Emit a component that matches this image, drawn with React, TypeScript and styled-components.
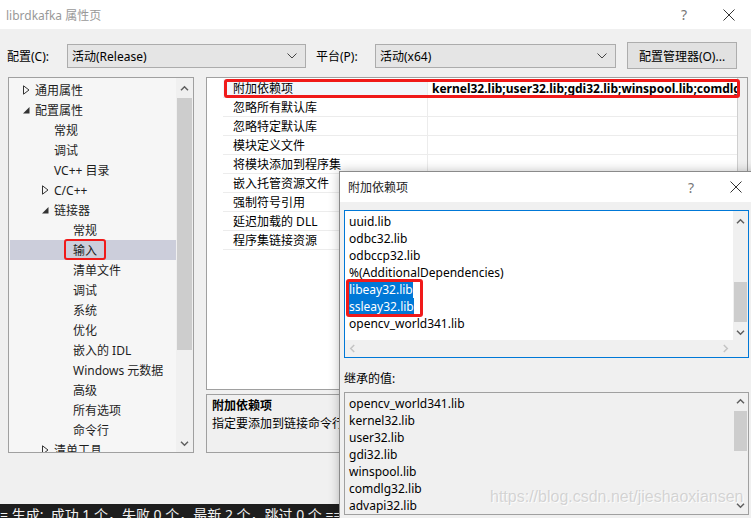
import React from "react";
import styled, { createGlobalStyle } from "styled-components";

const GlobalStyle = createGlobalStyle`
  html, body {
    margin: 0;
    padding: 0;
  }
  body {
    background: #f0f0f0;
    font-family: "Noto Sans", "Noto Sans CJK SC", sans-serif;
    font-size: 12px;
    color: #000;
  }
`;

const RED = "#f01a1a";

const Screen = styled.div`
  position: relative;
  width: 751px;
  height: 518px;
  overflow: hidden;
  background: #f0f0f0;
  display: flex;
  flex-direction: column;
`;

const MainWindow = styled.div`
  flex: 1;
  display: flex;
  flex-direction: column;
  min-height: 0;
`;

const TitleBar = styled.div`
  height: 29px;
  flex: none;
  background: #fff;
  display: flex;
  align-items: center;
  padding-left: 6px;
  color: #999;
  font-size: 12px;
`;

const TitleText = styled.span`
  flex: 1;
`;

const CaptionButton = styled.span<{ $width: number }>`
  width: ${(p) => p.$width}px;
  display: flex;
  justify-content: center;
  align-items: center;
  color: #777;
  font-size: 14px;
`;

const ConfigRow = styled.div`
  margin-top: 13px;
  height: 27px;
  flex: none;
  display: flex;
  align-items: center;
  padding-left: 7px;
`;

const FieldLabel = styled.span<{ $width: number; $gap?: number }>`
  width: ${(p) => p.$width}px;
  margin-left: ${(p) => p.$gap ?? 0}px;
  flex: none;
`;

const Combo = styled.div<{ $width: number }>`
  width: ${(p) => p.$width}px;
  height: 24px;
  box-sizing: border-box;
  flex: none;
  border: 1px solid #acacac;
  background: #e5e5e5;
  display: flex;
  align-items: center;
  padding: 0 8px 0 4px;
`;

const ComboText = styled.span`
  flex: 1;
`;

const PushButton = styled.div`
  margin-left: 11px;
  width: 110px;
  height: 27px;
  box-sizing: border-box;
  border: 1px solid #adadad;
  background: #e1e1e1;
  display: flex;
  align-items: center;
  justify-content: center;
`;

const Body = styled.div`
  margin-top: 8px;
  display: flex;
  padding-left: 8px;
  gap: 12px;
`;

const TreePanel = styled.div`
  width: 186px;
  height: 376px;
  box-sizing: border-box;
  border: 1px solid #a0a0a0;
  background: #f6f6f6;
  display: flex;
  overflow: hidden;
`;

const TreeList = styled.div`
  flex: 1;
  padding-top: 2px;
  overflow: hidden;
`;

const TreeRow = styled.div<{ $level: number; $selected?: boolean }>`
  height: 20px;
  display: flex;
  align-items: center;
  padding-left: ${(p) => 13 + 19 * (p.$level - 1)}px;
  margin-left: 1px;
  background: ${(p) => (p.$selected ? "#cccedb" : "transparent")};
  color: #1e1e1e;
  white-space: nowrap;
`;

const ToggleBox = styled.span`
  width: 12px;
  flex: none;
  display: flex;
  align-items: center;
`;

const TreeLabel = styled.span`
  position: relative;
  height: 100%;
  display: flex;
  align-items: center;
`;

const TreeMark = styled.span`
  position: absolute;
  left: -9px;
  right: -9px;
  top: -1px;
  bottom: 0;
  border: 2.5px solid ${RED};
  border-radius: 3px;
`;

const VScroll = styled.div<{ $width: number }>`
  width: ${(p) => p.$width}px;
  flex: none;
  display: flex;
  flex-direction: column;
  background: #f0f0f0;
`;

const ArrowBox = styled.div<{ $size: number }>`
  height: ${(p) => p.$size}px;
  flex: none;
  display: flex;
  align-items: center;
  justify-content: center;
`;

const Track = styled.div`
  flex: 1;
  display: flex;
  flex-direction: column;
`;

const Thumb = styled.div<{ $offset: number; $length: number }>`
  margin: ${(p) => p.$offset}px 1px 0;
  height: ${(p) => p.$length}px;
  background: #cdcdcd;
`;

const RightColumn = styled.div`
  width: 542px;
  display: flex;
  flex-direction: column;
  gap: 4px;
`;

const PropPanel = styled.div`
  height: 313px;
  box-sizing: border-box;
  border: 1px solid #a0a0a0;
  background: #fff;
  display: flex;
`;

const GridArea = styled.div`
  flex: 1;
  min-width: 0;
  padding: 1px 0 0 16px;
`;

const GridGutter = styled.div`
  width: 9px;
  flex: none;
  border-left: 1px solid #cfcfcf;
  background: #f0f0f0;
`;

const GridRow = styled.div`
  position: relative;
  height: 19px;
  box-sizing: border-box;
  display: flex;
  border-bottom: 1px solid #ececec;
`;

const NameCell = styled.div<{ $active?: boolean }>`
  width: 205px;
  flex: none;
  box-sizing: border-box;
  padding-left: 10px;
  display: flex;
  align-items: center;
  border-right: 1px solid #ececec;
  background: ${(p) => (p.$active ? "#f3f6fb" : "#fff")};
  white-space: nowrap;
`;

const ValueCell = styled.div`
  flex: 1;
  min-width: 0;
  padding-left: 4px;
  display: flex;
  align-items: center;
  font-weight: 700;
  white-space: nowrap;
  overflow: hidden;
`;

const RowMark = styled.span`
  position: absolute;
  left: 1px;
  right: -3px;
  top: 0;
  bottom: -1px;
  border: 3px solid ${RED};
  border-radius: 3px;
`;

const DescPanel = styled.div`
  height: 59px;
  box-sizing: border-box;
  border: 1px solid #a0a0a0;
  padding: 2px 0 0 5px;
  line-height: 18px;
  white-space: nowrap;
  overflow: hidden;
`;

const DescTitle = styled.div`
  font-weight: 700;
`;

const StatusStrip = styled.div`
  height: 14px;
  flex: none;
  background: #1e1e1e;
  color: #f1f1f1;
  font-size: 14px;
  line-height: 18px;
  padding-top: 2px;
  box-sizing: border-box;
  overflow: hidden;
  white-space: pre;
`;

const Dialog = styled.div`
  position: absolute;
  left: 339px;
  top: 171px;
  width: 430px;
  height: 360px;
  box-sizing: border-box;
  border: 1px solid #8a8a8a;
  background: #f0f0f0;
  box-shadow: 0 0 10px rgba(0, 0, 0, 0.25);
  display: flex;
  flex-direction: column;
`;

const DialogTitle = styled.div`
  height: 30px;
  flex: none;
  background: #fff;
  display: flex;
  align-items: center;
  padding-left: 8px;
  color: #1e1e1e;
`;

const DialogBody = styled.div`
  padding: 8px 0 0 4px;
`;

const EditBox = styled.div<{ $focused?: boolean; $height: number }>`
  width: 405px;
  height: ${(p) => p.$height}px;
  box-sizing: border-box;
  border: 1px solid ${(p) => (p.$focused ? "#0078d7" : "#a0a0a0")};
  background: ${(p) => (p.$focused ? "#fff" : "#f0f0f0")};
  display: flex;
  flex-direction: column;
`;

const EditMain = styled.div`
  flex: 1;
  display: flex;
  min-height: 0;
`;

const EditLines = styled.div`
  flex: 1;
  padding: 2px 0 0 4px;
  overflow: hidden;
`;

const EditLine = styled.div`
  height: 17px;
  line-height: 17px;
  white-space: nowrap;
`;

const SelectedText = styled.span`
  background: #0078d7;
  color: #fff;
  display: inline-block;
  height: 17px;
`;

const SelectionGroup = styled.div`
  position: relative;
`;

const SelectionMark = styled.span`
  position: absolute;
  left: -3px;
  top: -2px;
  width: 77px;
  height: 38px;
  box-sizing: border-box;
  border: 3px solid ${RED};
  border-radius: 3px;
`;

const HScroll = styled.div`
  height: 17px;
  flex: none;
  display: flex;
  background: #f0f0f0;
`;

const HArrow = styled.div`
  width: 15px;
  display: flex;
  align-items: center;
  justify-content: center;
`;

const HTrack = styled.div`
  flex: 1;
`;

const ScrollCorner = styled.div`
  width: 15px;
  background: #f0f0f0;
`;

const InheritLabel = styled.div`
  height: 34px;
  box-sizing: border-box;
  padding-top: 12px;
  line-height: 17px;
`;

const Watermark = styled.div`
  position: absolute;
  left: 490px;
  top: 488px;
  font-family: "Liberation Sans", Arial, sans-serif;
  font-size: 16px;
  color: rgba(160, 160, 160, 0.4);
  text-shadow: 1px 1px 0 rgba(255, 255, 255, 0.8);
  white-space: nowrap;
  pointer-events: none;
`;

type Dir = "up" | "down" | "left" | "right";

const ScrollArrow = ({ dir, color = "#606060" }: { dir: Dir; color?: string }) => {
  const rot = { up: 0, right: 90, down: 180, left: 270 }[dir];
  return (
    <svg width="9" height="9" viewBox="0 0 9 9">
      <path
        d="M1 6.2 L4.5 2.7 L8 6.2"
        fill="none"
        stroke={color}
        strokeWidth="1.5"
        transform={`rotate(${rot} 4.5 4.5)`}
      />
    </svg>
  );
};

const ComboChevron = () => (
  <svg width="10" height="6" viewBox="0 0 10 6">
    <path d="M0.5 0.5 L5 5 L9.5 0.5" fill="none" stroke="#444" strokeWidth="1" />
  </svg>
);

const CloseGlyph = () => (
  <svg width="12" height="12" viewBox="0 0 12 12">
    <path d="M0.5 0.5 L11.5 11.5 M11.5 0.5 L0.5 11.5" stroke="#333" strokeWidth="1" />
  </svg>
);

const Toggle = ({ state }: { state: "open" | "closed" }) =>
  state === "closed" ? (
    <svg width="7" height="10" viewBox="0 0 7 10">
      <path d="M0.5 0.8 L6 5 L0.5 9.2 Z" fill="none" stroke="#333" strokeWidth="1" />
    </svg>
  ) : (
    <svg width="7" height="7" viewBox="0 0 7 7">
      <path d="M6.5 0 L6.5 6.5 L0 6.5 Z" fill="#333" />
    </svg>
  );

interface ScrollbarProps {
  width: number;
  up: number;
  down: number;
  offset: number;
  length: number;
}

const Scrollbar: React.FC<ScrollbarProps> = ({ width, up, down, offset, length }) => (
  <VScroll $width={width}>
    <ArrowBox $size={up}>
      <ScrollArrow dir="up" />
    </ArrowBox>
    <Track>
      <Thumb $offset={offset} $length={length} />
    </Track>
    <ArrowBox $size={down}>
      <ScrollArrow dir="down" />
    </ArrowBox>
  </VScroll>
);

type TreeItem = {
  label: string;
  level: number;
  toggle?: "open" | "closed";
  selected?: boolean;
};

const treeItems: TreeItem[] = [
  { label: "通用属性", level: 1, toggle: "closed" },
  { label: "配置属性", level: 1, toggle: "open" },
  { label: "常规", level: 2 },
  { label: "调试", level: 2 },
  { label: "VC++ 目录", level: 2 },
  { label: "C/C++", level: 2, toggle: "closed" },
  { label: "链接器", level: 2, toggle: "open" },
  { label: "常规", level: 3 },
  { label: "输入", level: 3, selected: true },
  { label: "清单文件", level: 3 },
  { label: "调试", level: 3 },
  { label: "系统", level: 3 },
  { label: "优化", level: 3 },
  { label: "嵌入的 IDL", level: 3 },
  { label: "Windows 元数据", level: 3 },
  { label: "高级", level: 3 },
  { label: "所有选项", level: 3 },
  { label: "命令行", level: 3 },
  { label: "清单工具", level: 2, toggle: "closed" },
];

const properties = [
  "附加依赖项",
  "忽略所有默认库",
  "忽略特定默认库",
  "模块定义文件",
  "将模块添加到程序集",
  "嵌入托管资源文件",
  "强制符号引用",
  "延迟加载的 DLL",
  "程序集链接资源",
];

const ownLibs = ["uuid.lib", "odbc32.lib", "odbccp32.lib", "%(AdditionalDependencies)"];
const selectedLibs = ["libeay32.lib", "ssleay32.lib"];

const inheritedLibs = [
  "opencv_world341.lib",
  "kernel32.lib",
  "user32.lib",
  "gdi32.lib",
  "winspool.lib",
  "comdlg32.lib",
  "advapi32.lib",
];

export default function App() {
  return (
    <>
      <GlobalStyle />
      <Screen>
        <MainWindow>
          <TitleBar>
            <TitleText>librdkafka 属性页</TitleText>
            <CaptionButton $width={46}>?</CaptionButton>
            <CaptionButton $width={44}>
              <CloseGlyph />
            </CaptionButton>
          </TitleBar>

          <ConfigRow>
            <FieldLabel $width={60}>配置(C):</FieldLabel>
            <Combo $width={239}>
              <ComboText>活动(Release)</ComboText>
              <ComboChevron />
            </Combo>
            <FieldLabel $width={59} $gap={10}>
              平台(P):
            </FieldLabel>
            <Combo $width={241}>
              <ComboText>活动(x64)</ComboText>
              <ComboChevron />
            </Combo>
            <PushButton>配置管理器(O)...</PushButton>
          </ConfigRow>

          <Body>
            <TreePanel>
              <TreeList>
                {treeItems.map((item, i) => (
                  <TreeRow key={i} $level={item.level} $selected={item.selected}>
                    <ToggleBox>{item.toggle && <Toggle state={item.toggle} />}</ToggleBox>
                    <TreeLabel>
                      {item.label}
                      {item.selected && <TreeMark />}
                    </TreeLabel>
                  </TreeRow>
                ))}
              </TreeList>
              <Scrollbar width={17} up={20} down={18} offset={0} length={252} />
            </TreePanel>

            <RightColumn>
              <PropPanel>
                <GridArea>
                  {properties.map((name, i) => (
                    <GridRow key={name}>
                      <NameCell $active={i === 0}>{name}</NameCell>
                      <ValueCell>
                        {i === 0 && "kernel32.lib;user32.lib;gdi32.lib;winspool.lib;comdlg32.lib"}
                      </ValueCell>
                      {i === 0 && <RowMark />}
                    </GridRow>
                  ))}
                </GridArea>
                <GridGutter />
              </PropPanel>
              <DescPanel>
                <DescTitle>附加依赖项</DescTitle>
                <div>指定要添加到链接命令行的附加项。</div>
              </DescPanel>
            </RightColumn>
          </Body>
        </MainWindow>

        <StatusStrip>{"= 生成:  成功 1 个，失败 0 个，最新 2 个，跳过 0 个 ========="}</StatusStrip>

        <Dialog>
          <DialogTitle>
            <TitleText>附加依赖项</TitleText>
            <CaptionButton $width={46}>?</CaptionButton>
            <CaptionButton $width={44}>
              <CloseGlyph />
            </CaptionButton>
            <CaptionButton $width={10} />
          </DialogTitle>
          <DialogBody>
            <EditBox $focused $height={148}>
              <EditMain>
                <EditLines>
                  {ownLibs.map((lib) => (
                    <EditLine key={lib}>{lib}</EditLine>
                  ))}
                  <SelectionGroup>
                    {selectedLibs.map((lib) => (
                      <EditLine key={lib}>
                        <SelectedText>{lib}</SelectedText>
                      </EditLine>
                    ))}
                    <SelectionMark />
                  </SelectionGroup>
                  <EditLine>opencv_world341.lib</EditLine>
                </EditLines>
                <Scrollbar width={15} up={20} down={16} offset={51} length={40} />
              </EditMain>
              <HScroll>
                <HArrow>
                  <ScrollArrow dir="left" color="#c4c4c4" />
                </HArrow>
                <HTrack />
                <HArrow>
                  <ScrollArrow dir="right" color="#c4c4c4" />
                </HArrow>
                <ScrollCorner />
              </HScroll>
            </EditBox>

            <InheritLabel>继承的值:</InheritLabel>

            <EditBox $height={123}>
              <EditMain>
                <EditLines>
                  {inheritedLibs.map((lib) => (
                    <EditLine key={lib}>{lib}</EditLine>
                  ))}
                </EditLines>
                <Scrollbar width={15} up={17} down={17} offset={1} length={40} />
              </EditMain>
            </EditBox>
          </DialogBody>
        </Dialog>

        <Watermark>https://blog.csdn.net/jieshaoxiansen</Watermark>
      </Screen>
    </>
  );
}
